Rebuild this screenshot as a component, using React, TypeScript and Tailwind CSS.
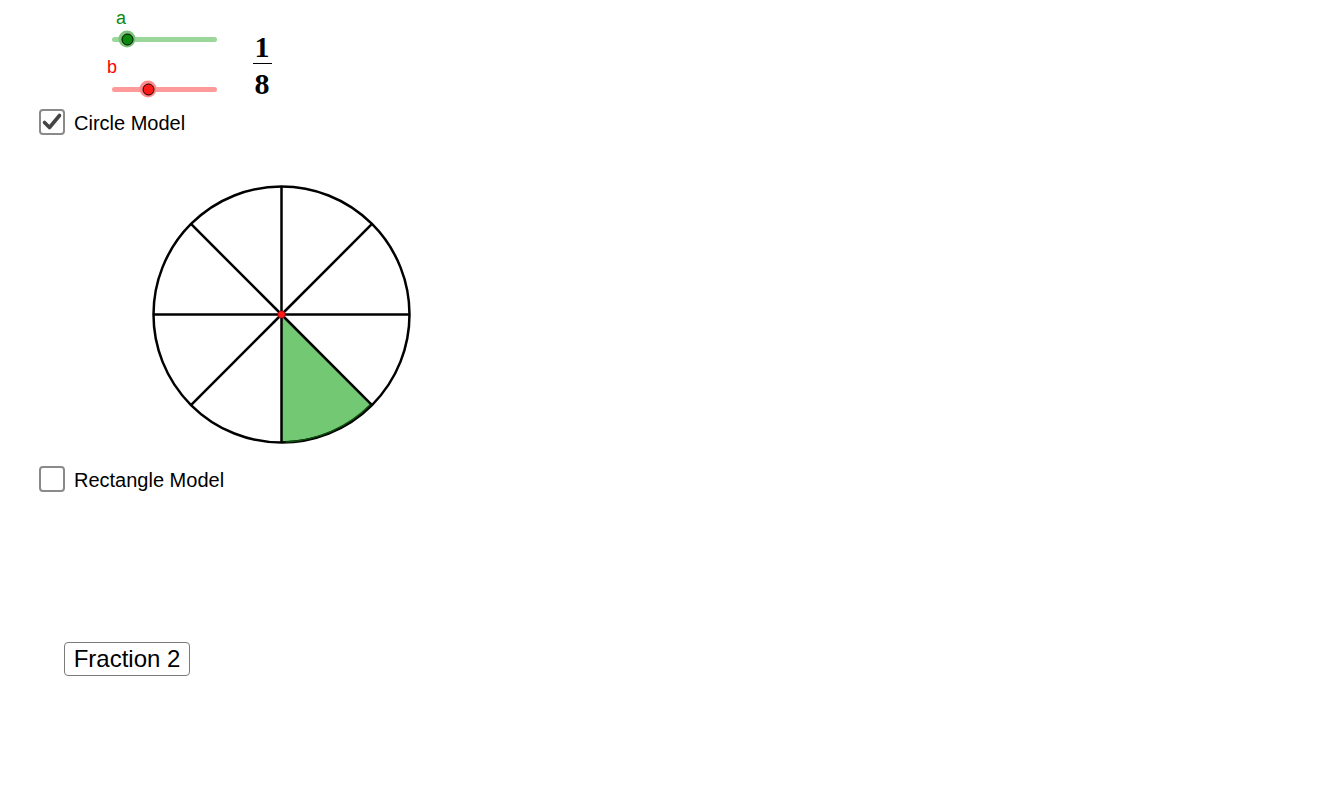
import React from "react";

function Slider({
  label,
  labelPad,
  labelColor,
  trackColor,
  haloColor,
  thumbColor,
  thumbOffset,
  mt,
  h,
}: {
  label: string;
  labelPad: string;
  labelColor: string;
  trackColor: string;
  haloColor: string;
  thumbColor: string;
  thumbOffset: number;
  mt: string;
  h: string;
}) {
  return (
    <div className={`flex flex-col ${mt}`}>
      <div className={`h-[20px] leading-[20px] text-[18px] ${labelPad} ${labelColor}`}>{label}</div>
      <div className={`flex items-center ${h}`}>
        <div className={`relative ml-[7px] w-[105px] h-[5px] rounded-full ${trackColor}`}>
          <div
            className={`absolute top-1/2 w-[17px] h-[17px] -translate-x-1/2 -translate-y-1/2 rounded-full ${haloColor} flex items-center justify-center`}
            style={{ left: thumbOffset }}
          >
            <div className={`w-[12px] h-[12px] rounded-full border border-black ${thumbColor}`} />
          </div>
        </div>
      </div>
    </div>
  );
}

function CheckBox({ checked }: { checked: boolean }) {
  return (
    <div className="w-[26px] h-[26px] rounded-[4px] border-2 border-[#8a8a8a] bg-white flex items-center justify-center">
      {checked && (
        <svg width="22" height="22" viewBox="0 0 22 22">
          <path d="M3.5 11.5 L8.5 16.5 L18.5 4.5" fill="none" stroke="#454545" strokeWidth="3.6" strokeLinecap="round" strokeLinejoin="round" />
        </svg>
      )}
    </div>
  );
}

function CircleModel() {
  const c = 131.5;
  const r = 128;
  const d = r / Math.SQRT2;
  const spokes = [0, 45, 90, 135, 180, 225, 270, 315];
  return (
    <svg width="264" height="264" viewBox="0 0 264 264" className="ml-[150px] mt-[48px] block">
      <path d={`M ${c} ${c} L ${c} ${c + r} A ${r} ${r} 0 0 0 ${c + d} ${c + d} Z`} fill="#73c873" />
      <circle cx={c} cy={c} r={r} fill="none" stroke="#000" strokeWidth="2.5" />
      <path d={`M ${c + 4} ${c + r - 0.5} A ${r - 0.5} ${r - 0.5} 0 0 0 ${c + d - 1} ${c + d - 1}`} fill="none" stroke="#0d4d0d" strokeWidth="1.5" />
      {spokes.map((a) => {
        const rad = (a * Math.PI) / 180;
        return (
          <line
            key={a}
            x1={c}
            y1={c}
            x2={c + r * Math.cos(rad)}
            y2={c + r * Math.sin(rad)}
            stroke="#000"
            strokeWidth="2.5"
          />
        );
      })}
      <circle cx={c} cy={c} r="3.6" fill="#ff1a1a" stroke="#b00000" strokeWidth="0.6" />
    </svg>
  );
}

export default function App() {
  return (
    <div
      className="w-[1332px] h-[792px] bg-white overflow-hidden flex flex-col text-black"
      style={{ fontFamily: '"Liberation Sans", Arial, sans-serif' }}
    >
      <div className="flex items-start">
        <div className="ml-[105px] w-[115px] flex flex-col">
          <Slider
            label="a"
            labelPad="pl-[11px]"
            labelColor="text-[#0a8a0a]"
            trackColor="bg-[#9bd79b]"
            haloColor="bg-[#7cc47c]"
            thumbColor="bg-[#0a8a0a]"
            thumbOffset={15}
            mt="mt-[8px]"
            h="h-[22px]"
          />
          <Slider
            label="b"
            labelPad="pl-[2px]"
            labelColor="text-[#ff0000]"
            trackColor="bg-[#ff9a9a]"
            haloColor="bg-[#ff8c8c]"
            thumbColor="bg-[#ff1a1a]"
            thumbOffset={36}
            mt="mt-[7px]"
            h="h-[24px]"
          />
        </div>
        <div
          className="ml-[32px] mt-[33px] w-[20px] flex flex-col items-center"
          style={{ fontFamily: '"Liberation Serif", "Times New Roman", serif' }}
        >
          <div className="h-[28px] leading-[28px] text-[30px] font-bold">1</div>
          <div className="mt-[1.5px] h-[1.5px] w-[19px] bg-black" />
          <div className="mt-[6px] h-[28px] leading-[28px] text-[30px] font-bold">8</div>
        </div>
      </div>

      <div className="mt-[8px] ml-[39px] flex items-center h-[26px]">
        <CheckBox checked />
        <span className="ml-[9px] mt-[2px] text-[20px] leading-[26px]">Circle Model</span>
      </div>

      <CircleModel />

      <div className="mt-[19px] ml-[39px] flex items-center h-[26px]">
        <CheckBox checked={false} />
        <span className="ml-[9px] mt-[2px] text-[20px] leading-[26px]">Rectangle Model</span>
      </div>

      <div className="mt-[150px] ml-[64px]">
        <button className="w-[126px] h-[34px] rounded-[4px] border border-[#7a7a7a] bg-white text-[24px] leading-[32px] text-black">
          Fraction 2
        </button>
      </div>
    </div>
  );
}
